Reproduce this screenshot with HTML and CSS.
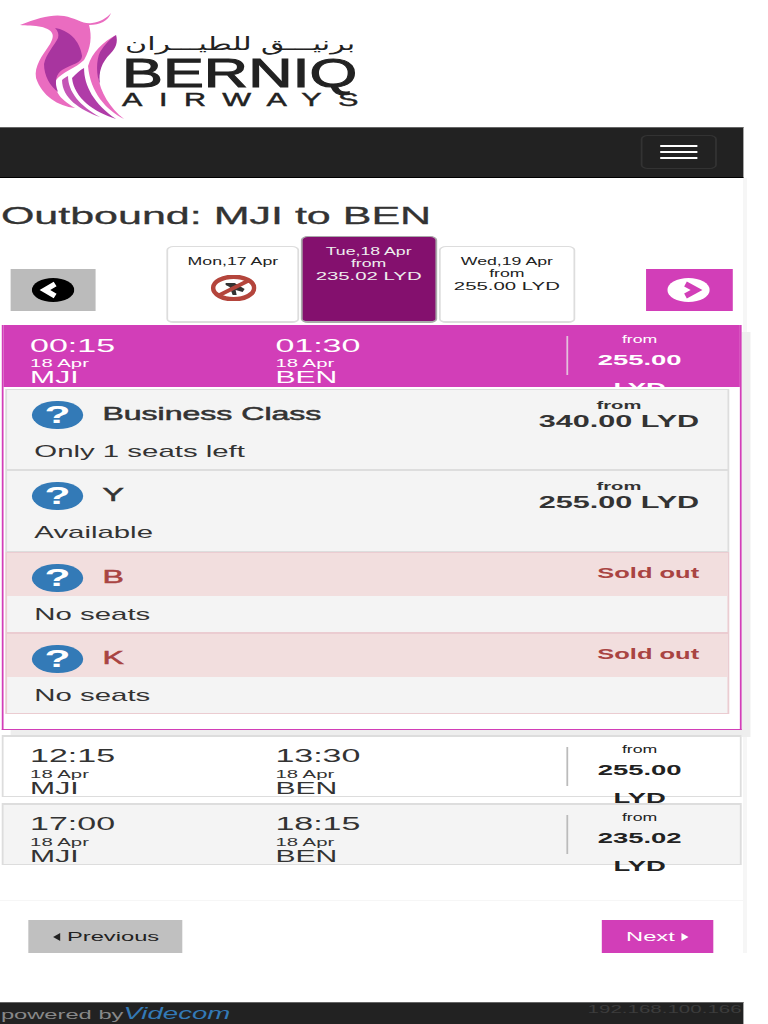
FILE: index.html
```html
<!DOCTYPE html>
<html lang="en">
<head>
  <meta charset="UTF-8">
  <title>Berniq Airways</title>
  <meta name="viewport" content="width=device-width, initial-scale=1">
  <link rel="stylesheet" href="styles.css">
</head>
<body>
<div class="page">

  <header class="logo">
    <svg class="logo-art" viewBox="0 0 743 127" preserveAspectRatio="none">
      <!-- bird -->
      <path fill="#ea6cc0" d="M20 25 C38 18 52 14 64 16 C76 18 84 25 92 23 C100 22 107 18 111 13 C108 21 100 25 89 25 C92 36 91 48 84 60 C76 68 62 72 56 80 C54 90 58 98 75 108 C58 106 42 96 36 78 C34 66 42 56 50 44 C56 34 52 30 42 27 C34 25 26 26 20 25 Z"/>
      <path fill="#a8359f" d="M55 28 C68 30 80 40 82 56 C82 63 72 64 62 70 C56 74 54 82 58 92 C50 86 44 76 44 64 C46 54 54 46 58 38 C59 34 58 31 55 28 Z"/>
      <path fill="#ea6cc0" d="M88 66 C92 52 103 42 116 35 C104 48 98 60 98 76 C100 92 110 108 124 119 C106 110 90 92 88 66 Z"/>
      <path fill="#a8359f" d="M116 35 C118 42 116 48 110 54 C102 62 98 72 100 84 C96 76 96 60 100 52 C105 44 110 39 116 35 Z"/>
      <path fill="#b03ca8" d="M72 78 C76 74 80 70 84 68 C84 86 94 104 116 119 C94 112 74 98 72 78 Z"/>
      <path fill="#c455b6" d="M62 80 C64 78 66 77 68 76 C68 92 80 106 100 117 C80 110 62 98 62 80 Z"/>
      <!-- wordmark -->
      <text class="logo-ar" x="125" y="50" font-size="18" textLength="230" lengthAdjust="spacingAndGlyphs">برنيـــق للطيـــران</text>
      <text class="logo-name" x="122" y="87" font-size="40" textLength="235" lengthAdjust="spacingAndGlyphs">BERNIQ</text>
      <g transform="translate(122 106) scale(1.7 1)">
        <text class="logo-sub" font-size="18" textLength="139" lengthAdjust="spacing">AIRWAYS</text>
      </g>
    </svg>
  </header>

  <nav class="navbar">
    <button class="toggle" type="button">
      <span class="bar"></span>
      <span class="bar"></span>
      <span class="bar"></span>
    </button>
  </nav>

  <main class="main">
    <h1 class="title">Outbound: MJI to BEN</h1>

    <div class="dates">
      <a class="arrow arrow-prev">
        <svg class="arrow-icon" viewBox="0 0 42 24" preserveAspectRatio="none">
          <ellipse cx="21" cy="12" rx="21" ry="12" fill="#000"/>
          <path d="M23 6 L13 12 L23 18" fill="none" stroke="#fff" stroke-width="5.5"/>
        </svg>
      </a>
      <div class="tab tab-mon">
        <div class="tab-day">Mon,17 Apr</div>
        <svg class="noflight" viewBox="0 0 46 26" preserveAspectRatio="none">
          <ellipse cx="23" cy="13" rx="20.5" ry="11.2" fill="#fff" stroke="#b4453c" stroke-width="4.5"/>
          <path d="M15 8 L24 8 L34 14 L32 17 L25 15 L26 20 L22 20 L19 12 L15 10 Z" fill="#333"/>
          <path d="M7 21 L39 5" stroke="#b4453c" stroke-width="4"/>
        </svg>
      </div>
      <div class="tab tab-active">
        <div class="tab-day">Tue,18 Apr</div>
        <div class="tab-from">from</div>
        <div class="tab-price">235.02 LYD</div>
      </div>
      <div class="tab">
        <div class="tab-day">Wed,19 Apr</div>
        <div class="tab-from">from</div>
        <div class="tab-price">255.00 LYD</div>
      </div>
      <a class="arrow arrow-next">
        <svg class="arrow-icon" viewBox="0 0 42 24" preserveAspectRatio="none">
          <ellipse cx="21" cy="12" rx="21" ry="12" fill="#fff"/>
          <path d="M18 6 L29 12 L18 18" fill="none" stroke="#d23eb8" stroke-width="5.5"/>
        </svg>
      </a>
    </div>

    <section class="selected">
      <div class="flight flight-head">
        <div class="stop">
          <div class="time">00:15</div>
          <div class="day">18 Apr</div>
          <div class="code">MJI</div>
        </div>
        <div class="stop">
          <div class="time">01:30</div>
          <div class="day">18 Apr</div>
          <div class="code">BEN</div>
        </div>
        <div class="rule"></div>
        <div class="price">
          <div class="price-from">from</div>
          <div class="price-value">255.00 LYD</div>
        </div>
      </div>

      <div class="fares">
        <div class="fare">
          <div class="fare-head">
            <span class="help">?</span>
            <span class="fare-name">Business Class</span>
            <div class="fare-price">
              <div class="fare-from">from</div>
              <div>340.00 LYD</div>
            </div>
          </div>
          <div class="fare-note">Only 1 seats left</div>
        </div>

        <div class="fare">
          <div class="fare-head">
            <span class="help">?</span>
            <span class="fare-name">Y</span>
            <div class="fare-price">
              <div class="fare-from">from</div>
              <div>255.00 LYD</div>
            </div>
          </div>
          <div class="fare-note">Available</div>
        </div>

        <div class="fare fare-sold">
          <div class="fare-head">
            <span class="help">?</span>
            <span class="fare-name">B</span>
            <div class="fare-out">Sold out</div>
          </div>
          <div class="fare-note">No seats</div>
        </div>

        <div class="fare fare-sold">
          <div class="fare-head">
            <span class="help">?</span>
            <span class="fare-name">K</span>
            <div class="fare-out">Sold out</div>
          </div>
          <div class="fare-note">No seats</div>
        </div>
      </div>
    </section>

    <div class="flight flight-row">
      <div class="stop">
        <div class="time">12:15</div>
        <div class="day">18 Apr</div>
        <div class="code">MJI</div>
      </div>
      <div class="stop">
        <div class="time">13:30</div>
        <div class="day">18 Apr</div>
        <div class="code">BEN</div>
      </div>
      <div class="rule"></div>
      <div class="price">
        <div class="price-from">from</div>
        <div class="price-value">255.00 LYD</div>
      </div>
    </div>

    <div class="flight flight-row flight-alt">
      <div class="stop">
        <div class="time">17:00</div>
        <div class="day">18 Apr</div>
        <div class="code">MJI</div>
      </div>
      <div class="stop">
        <div class="time">18:15</div>
        <div class="day">18 Apr</div>
        <div class="code">BEN</div>
      </div>
      <div class="rule"></div>
      <div class="price">
        <div class="price-from">from</div>
        <div class="price-value">235.02 LYD</div>
      </div>
    </div>

    <div class="pager">
      <a class="pager-btn pager-prev"><span class="tri tri-left"></span>Previous</a>
      <a class="pager-btn pager-next">Next<span class="tri tri-right"></span></a>
    </div>
  </main>

  <footer class="footer">
    <div class="powered">powered by<span class="brand">Videcom</span></div>
    <div class="ip">192.168.100.166</div>
  </footer>

</div>
</body>
</html>
```

FILE: styles.css
```css
* {
  box-sizing: border-box;
}
html, body {
  margin: 0;
  padding: 0;
  height: 1024px;
  overflow: hidden;
  background: #fff;
}
body {
  font-family: "Liberation Sans", Arial, sans-serif;
  color: #333;
}

/* the whole phone layout is stretched sideways in the screenshot */
.page {
  width: 420px;
  transform: scaleX(1.77);
  transform-origin: 0 0;
}

.logo {
  height: 127px;
}
.logo-art {
  display: block;
  width: 420px;
  height: 127px;
}
.logo-name {
  font-family: "Liberation Sans", sans-serif;
  fill: #222;
  stroke: #222;
  stroke-width: 1px;
}
.logo-sub {
  font-family: "Liberation Sans", sans-serif;
  fill: #222;
  stroke: #222;
  stroke-width: 0.4px;
}
.logo-ar {
  font-family: "DejaVu Sans", sans-serif;
  fill: #222;
}

.navbar {
  height: 51px;
  background: #222;
  border-top: 1px solid #666;
  border-bottom: 1px solid #000;
  display: flex;
  justify-content: flex-end;
  padding: 7px 15px 0 0;
}
.toggle {
  width: 43.4px;
  height: 34px;
  padding: 0;
  background: none;
  border: 1px solid #333;
  border-radius: 4px;
  display: flex;
  flex-direction: column;
  align-items: center;
  justify-content: center;
  gap: 4px;
}
.bar {
  display: block;
  width: 21px;
  height: 2px;
  background: #fff;
}

.main {
  box-shadow: 2px 0 0 #f6f6f6;
}
.title {
  margin: 0;
  padding: 25px 0 7px 0.5px;
  font-size: 24.3px;
  line-height: 26px;
  font-weight: normal;
  color: #333;
  -webkit-text-stroke: 0.3px #333;
}

.dates {
  display: flex;
  align-items: flex-end;
  height: 88px;
  margin-bottom: 1px;
  padding: 0 6.4px 1px 5.6px;
}
.arrow {
  display: flex;
  align-items: center;
  justify-content: center;
  width: 48.6px;
  height: 42px;
  margin-bottom: 12px;
  background: #bbb;
}
.arrow-prev {
  margin-right: 40.1px;
}
.arrow-next {
  margin-left: auto;
  background: #d23eb8;
}
.arrow-icon {
  display: block;
  width: 24px;
  height: 24px;
}
.tab {
  width: 77.4px;
  height: 77px;
  margin-right: 1px;
  padding-top: 9px;
  background: #fff;
  border: 1px solid #ddd;
  border-bottom-width: 2px;
  border-radius: 4px;
  text-align: center;
  color: #222;
}
.tab-mon {
  width: 74.6px;
}
.tab-active {
  width: 76.8px;
  height: 87px;
  background: #84106e;
  border-color: #aaa;
  color: #eee;
}
.tab-day {
  font-size: 10px;
  line-height: 12px;
}
.tab-from {
  font-size: 10px;
  line-height: 11px;
}
.tab-price {
  font-size: 11.5px;
  line-height: 14px;
}
.noflight {
  display: block;
  width: 26px;
  height: 26px;
  margin: 7px auto 0;
}

.selected {
  width: 418px;
  height: 405px;
  margin-left: 1px;
  background: #fff;
  border: 1px solid #d23eb8;
  border-top: 0;
  box-shadow: 5px 7px 0 #eee;
}
.flight {
  display: flex;
  height: 62px;
  padding-top: 10px;
}
.flight-head {
  background: #d23eb8;
  color: #fff;
  overflow: hidden;
}
.flight-row {
  width: 418px;
  margin-left: 1px;
  background: #fff;
  border: 1px solid #ddd;
  border-top-width: 2px;
  padding-top: 9px;
  position: relative;
}
.selected + .flight-row {
  margin-top: 5px;
}
.flight-alt {
  margin-top: 6px;
  background: #f4f4f4;
}
.stop {
  flex: none;
  width: 138.6px;
  padding-left: 15px;
}
.time {
  font-size: 19.2px;
  line-height: 20px;
}
.flight-head .time {
  line-height: 21px;
  margin-bottom: -1px;
}
.day {
  font-size: 11.5px;
  line-height: 16px;
}
.code {
  font-size: 17px;
  line-height: 14px;
}
.rule {
  flex: none;
  width: 1px;
  height: 39px;
  margin: 1px 0 0 40.7px;
  background: #bbb;
}
.flight-head .rule {
  background: #e4c0dc;
}
.price {
  flex: none;
  width: 81px;
  margin-top: -2px;
  text-align: center;
  color: #222;
}
.flight-head .price {
  margin-top: -1px;
  color: #fff;
}
.price-from {
  font-size: 10px;
  line-height: 12px;
}
.price-value {
  font-size: 15.5px;
  line-height: 28px;
  font-weight: bold;
  width: 60px;
  margin: 0 auto;
}

.fares {
  padding: 2px 6px 0 1.4px;
}
.fare {
  height: 81.25px;
  background: #f4f4f4;
  border: 1px solid #ddd;
}
.fare-head {
  display: flex;
  align-items: flex-start;
  height: 43px;
  padding: 11px 16px 0 14px;
}
.help {
  flex: none;
  width: 28.2px;
  height: 28px;
  border-radius: 50%;
  background: #337ab7;
  color: #fff;
  font-size: 24px;
  font-weight: bold;
  line-height: 28px;
  text-align: center;
}
.fare-name {
  margin-left: 11.3px;
  font-size: 18.1px;
  line-height: 27px;
  -webkit-text-stroke: 0.5px currentColor;
}
.fare-price {
  margin: -2px 0 0 auto;
  font-size: 17.3px;
  font-weight: bold;
  line-height: 18px;
  text-align: center;
  color: #333;
}
.fare-from {
  font-size: 11.4px;
  line-height: 12.5px;
}
.fare-out {
  margin: -1px 0 0 auto;
  font-size: 14.4px;
  font-weight: bold;
  line-height: 20px;
}
.fare-note {
  padding-left: 15px;
  font-size: 16.6px;
  line-height: 38px;
}
.fare-sold {
  border-color: #ebccd1;
}
.fare-sold .fare-head {
  background: #f2dede;
  color: #a94442;
}

.pager {
  display: flex;
  justify-content: space-between;
  margin-top: 35px;
  padding: 19px 17.2px 0 16.4px;
  border-top: 1px solid #f6f6f6;
}
.pager-btn {
  display: flex;
  align-items: center;
  justify-content: center;
  height: 33px;
  font-size: 13.4px;
  color: #222;
}
.pager-prev {
  width: 87px;
  background: #c0c0c0;
}
.pager-next {
  width: 62.7px;
  background: #d23eb8;
  color: #fff;
}
.tri {
  display: inline-block;
  border-top: 4px solid transparent;
  border-bottom: 4px solid transparent;
}
.tri-left {
  margin-right: 4px;
  border-right: 4.5px solid #222;
}
.tri-right {
  margin-left: 4px;
  border-left: 4.5px solid #fff;
}

.footer {
  display: flex;
  justify-content: space-between;
  height: 22px;
  margin-top: 49px;
  padding: 0 1px 0 0.5px;
  background: #222;
  border-top: 1px solid #666;
}
.powered {
  font-size: 13.4px;
  line-height: 22px;
  color: #888;
}
.brand {
  font-size: 15.6px;
  font-style: italic;
  color: #337ab7;
}
.ip {
  font-size: 11.6px;
  line-height: 12px;
  color: #3c3c3c;
}
```
